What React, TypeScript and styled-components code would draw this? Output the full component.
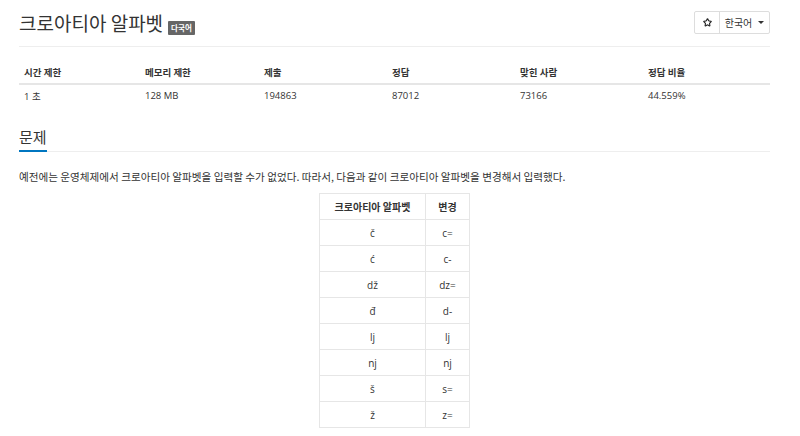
import styled, { createGlobalStyle } from "styled-components";
import { Star } from "lucide-react";

const GlobalStyle = createGlobalStyle`
    body{
        margin:0;
        background:#fff;
        font-family:"Open Sans", "Noto Sans CJK KR", sans-serif;
        color:#333;
    }
`

const infoCols = [
    { head: "시간 제한", value: "1 초", width: 121 },
    { head: "메모리 제한", value: "128 MB", width: 119 },
    { head: "제출", value: "194863", width: 128 },
    { head: "정답", value: "87012", width: 128 },
    { head: "맞힌 사람", value: "73166", width: 128 },
    { head: "정답 비율", value: "44.559%", width: 127 },
]

const alphabet = [
    ["č", "c="],
    ["ć", "c-"],
    ["dž", "dz="],
    ["đ", "d-"],
    ["lj", "lj"],
    ["nj", "nj"],
    ["š", "s="],
    ["ž", "z="],
]

export default function App() {
    return <Page>
        <GlobalStyle/>
        <Header>
            <Title>
                크로아티아 알파벳
                <Badge>다국어</Badge>
            </Title>
            <BtnGroup>
                <Btn $w={24}><Star size={9} strokeWidth={3} color="#222"/></Btn>
                <Btn $w={49}>한국어<Caret/></Btn>
            </BtnGroup>
        </Header>

        <InfoTable>
            <colgroup>
                {infoCols.map(c => <col key={c.head} style={{width: c.width}}/>)}
            </colgroup>
            <thead>
                <tr>
                    {infoCols.map(c => <th key={c.head}>{c.head}</th>)}
                </tr>
            </thead>
            <tbody>
                <tr>
                    {infoCols.map(c => <td key={c.head}>{c.value}</td>)}
                </tr>
            </tbody>
        </InfoTable>

        <Section>
            <SectionHead><span>문제</span></SectionHead>
            <Desc>예전에는 운영체제에서 크로아티아 알파벳을 입력할 수가 없었다. 따라서, 다음과 같이 크로아티아 알파벳을 변경해서 입력했다.</Desc>
            <AlphaTable>
                <thead>
                    <tr>
                        <th>크로아티아 알파벳</th>
                        <th>변경</th>
                    </tr>
                </thead>
                <tbody>
                    {alphabet.map(([a, b]) => <tr key={a}>
                        <td>{a}</td>
                        <td>{b}</td>
                    </tr>)}
                </tbody>
            </AlphaTable>
        </Section>
    </Page>
}

const Page = styled.div`
    width:751px;
    padding-left:19px;
    padding-right:30px;
`

const Header = styled.div`
    display:flex;
    justify-content:space-between;
    align-items:flex-start;
    padding-top:11px;
    padding-bottom:12px;
    border-bottom:1px solid #eee;
`

const Title = styled.h1`
    margin:0;
    margin-top:1px;
    font-family:"Noto Sans CJK KR", sans-serif;
    font-weight:400;
    font-size:19px;
    line-height:22px;
    color:#333;
    display:flex;
    align-items:flex-end;
`

const Badge = styled.span`
    margin-left:5px;
    margin-bottom:-1px;
    background:#666;
    color:#fff;
    font-family:"Noto Sans CJK KR", sans-serif;
    font-size:7.5px;
    font-weight:700;
    line-height:14px;
    padding:0 3px;
    border-radius:1px;
`

const BtnGroup = styled.div`
    display:flex;
    border:1px solid #ddd;
    border-radius:2px;
`

const Btn = styled.div<{ $w: number }>`
    width:${p => p.$w}px;
    height:21px;
    display:flex;
    align-items:center;
    justify-content:center;
    gap:6px;
    font-size:10px;
    color:#333;
    font-family:"Noto Sans CJK KR", sans-serif;
    & + &{
        border-left:1px solid #ddd;
    }
`

const Caret = styled.span`
    display:inline-block;
    width:0;
    height:0;
    border-left:3px solid transparent;
    border-right:3px solid transparent;
    border-top:3px solid #333;
`

const InfoTable = styled.table`
    margin-top:14px;
    width:751px;
    border-collapse:collapse;
    table-layout:fixed;
    font-family:"Open Sans", "Noto Sans CJK KR", sans-serif;
    font-size:9.5px;
    color:#333;
    th{
        text-align:left;
        font-family:"Noto Sans CJK KR", sans-serif;
        font-weight:700;
        padding:0 5px;
        height:22px;
        border-bottom:2px solid #e6e6e6;
    }
    td{
        padding:0 5px;
        height:21px;
    }
`

const Section = styled.section`
    margin-top:20px;
`

const SectionHead = styled.div`
    border-bottom:1px solid #eee;
    span{
        display:inline-block;
        font-family:"Noto Sans CJK KR", sans-serif;
        font-size:15px;
        line-height:20px;
        color:#333;
        padding-bottom:3px;
        border-bottom:2px solid #0076c0;
        margin-bottom:-1px;
    }
`

const Desc = styled.p`
    margin:17px 0 8px;
    font-family:"Noto Sans CJK KR", sans-serif;
    font-size:10.6px;
    line-height:16px;
    color:#333;
`

const AlphaTable = styled.table`
    margin:0 auto;
    border-collapse:collapse;
    font-family:"Open Sans", "Noto Sans CJK KR", sans-serif;
    font-size:10px;
    color:#333;
    th, td{
        border:1px solid #e6e6e6;
        height:25px;
        text-align:center;
        padding:0;
    }
    th{
        font-family:"Noto Sans CJK KR", sans-serif;
        font-weight:700;
    }
    th:first-child, td:first-child{
        width:105px;
    }
    th:last-child, td:last-child{
        width:43px;
    }
`
